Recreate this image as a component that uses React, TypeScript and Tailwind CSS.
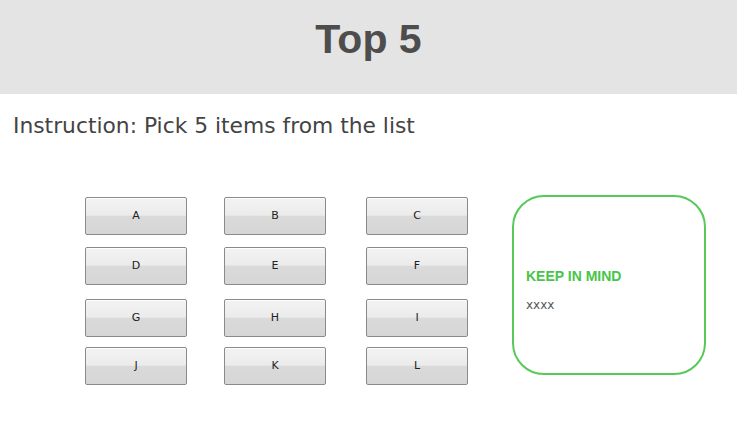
const rows = [
  { items: ['A', 'B', 'C'], mt: 'mt-0' },
  { items: ['D', 'E', 'F'], mt: 'mt-[12px]' },
  { items: ['G', 'H', 'I'], mt: 'mt-[14px]' },
  { items: ['J', 'K', 'L'], mt: 'mt-[10px]' },
];

function ItemButton({ label }: { label: string }) {
  return (
    <button
      type="button"
      className="h-[38px] w-[102px] rounded-[2px] border border-[#8a8a8a] bg-[linear-gradient(to_bottom,#f3f3f3_0%,#ebebeb_48%,#dadada_50%,#d6d6d6_100%)] text-[11px] text-[#222] shadow-[inset_0_1px_0_#fff]"
    >
      {label}
    </button>
  );
}

export default function App() {
  return (
    <div className="h-[424px] w-[737px] bg-white font-['DejaVu_Sans',sans-serif]">
      <header className="flex h-[94px] items-center justify-center bg-[#e4e4e4]">
        <h1 className="mb-[16px] font-['Liberation_Sans',sans-serif] text-[41px] font-bold leading-none text-[#4d4d4d]">
          Top 5
        </h1>
      </header>

      <p className="ml-[13px] mt-[21px] text-[21.8px] leading-none text-[#444]">
        Instruction: Pick 5 items from the list
      </p>

      <div className="mt-[58px] flex items-start">
        <div className="ml-[85px] mt-[2px] flex flex-col">
          {rows.map((row) => (
            <div key={row.items[0]} className={`flex ${row.mt}`}>
              <ItemButton label={row.items[0]} />
              <div className="ml-[37px]">
                <ItemButton label={row.items[1]} />
              </div>
              <div className="ml-[40px]">
                <ItemButton label={row.items[2]} />
              </div>
            </div>
          ))}
        </div>

        <div className="ml-[44px] flex h-[180px] w-[194px] flex-col rounded-[32px] border-2 border-[#57c957] pl-[12px] pt-[72px]">
          <h3 className="font-['Liberation_Sans',sans-serif] text-[14px] font-bold leading-none text-[#48c548]">
            KEEP IN MIND
          </h3>
          <p className="mt-[16px] text-[12px] leading-none text-[#555]">xxxx</p>
        </div>
      </div>
    </div>
  );
}
